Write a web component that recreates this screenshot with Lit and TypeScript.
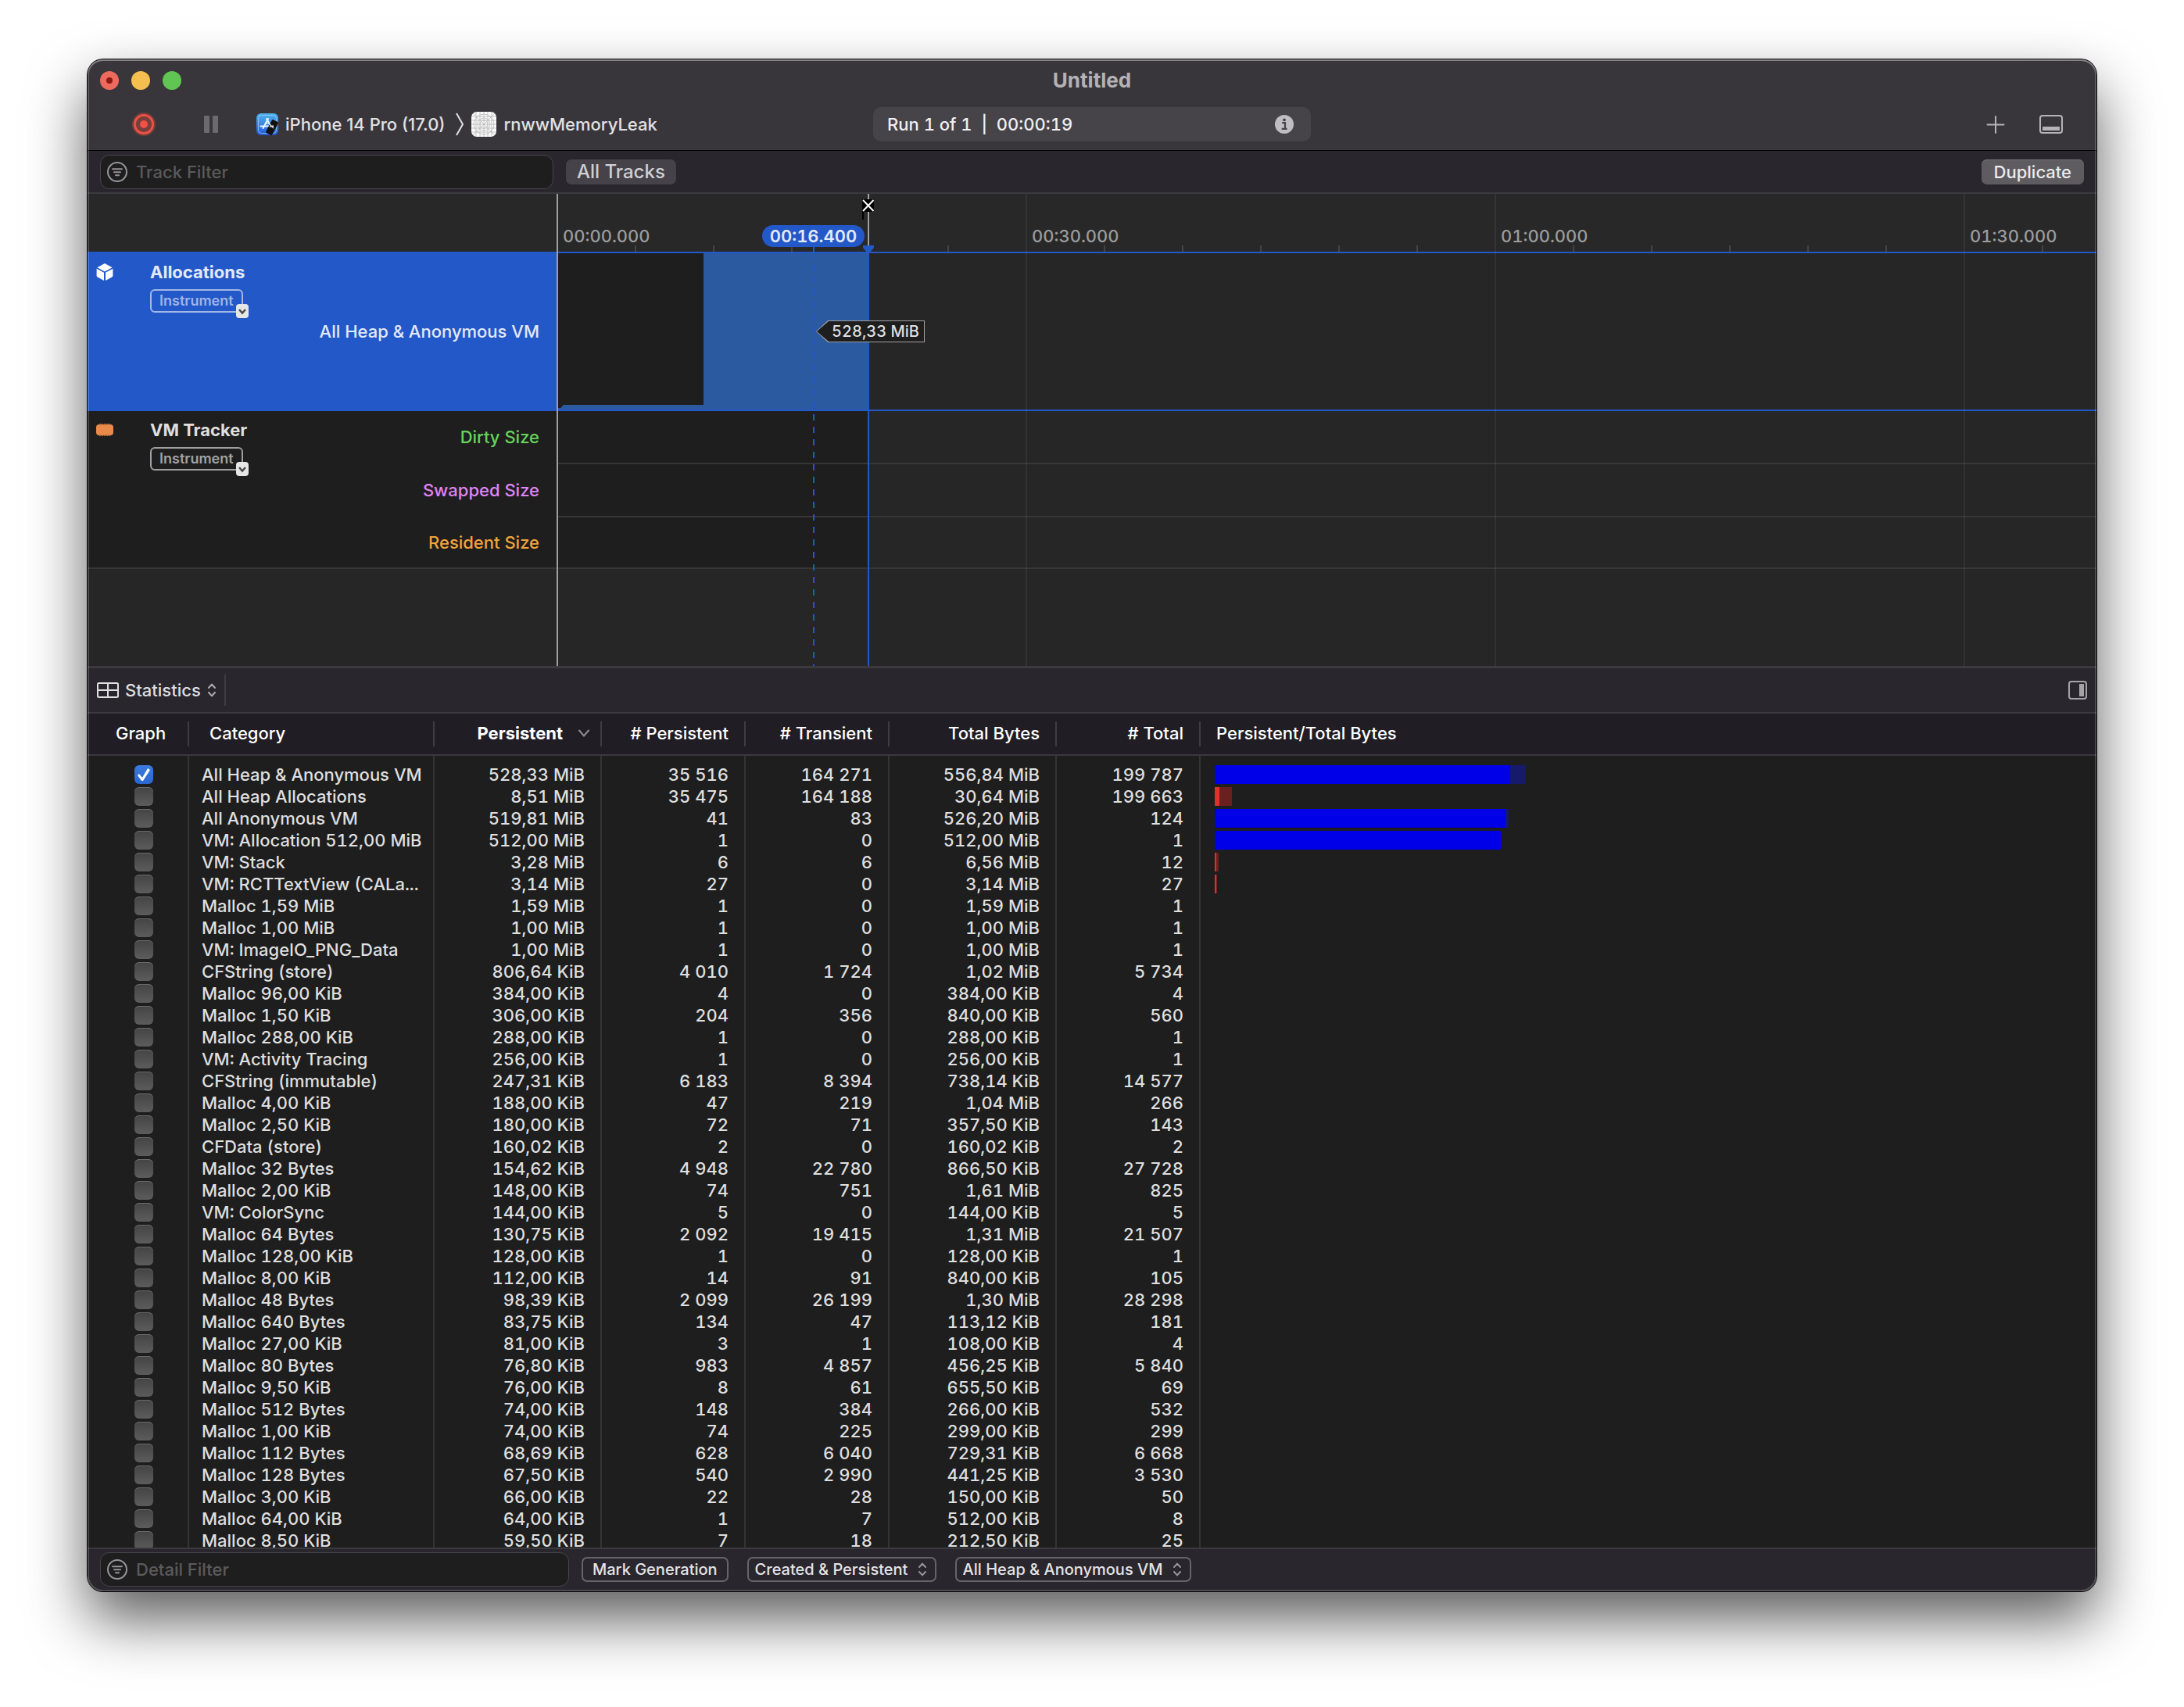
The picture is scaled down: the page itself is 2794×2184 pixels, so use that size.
import { LitElement, html, css, svg, nothing } from "lit";
import { customElement, property, state } from "lit/decorators.js";
import { classMap } from "lit/directives/class-map.js";

type Row = {
  category: string;
  persistent: string;
  nPersistent: string;
  nTransient: string;
  total: string;
  nTotal: string;
  bar?: { used: number; all: number; color: "blue" | "red" };
};

const row = (
  category: string,
  persistent: string,
  nPersistent: string,
  nTransient: string,
  total: string,
  nTotal: string,
  bar?: Row["bar"],
): Row => ({ category, persistent, nPersistent, nTransient, total, nTotal, bar });

const ROWS: Row[] = [
  row("All Heap & Anonymous VM", "528,33 MiB", "35 516", "164 271", "556,84 MiB", "199 787", { used: 378, all: 398, color: "blue" }),
  row("All Heap Allocations", "8,51 MiB", "35 475", "164 188", "30,64 MiB", "199 663", { used: 6, all: 22, color: "red" }),
  row("All Anonymous VM", "519,81 MiB", "41", "83", "526,20 MiB", "124", { used: 372, all: 376, color: "blue" }),
  row("VM: Allocation 512,00 MiB", "512,00 MiB", "1", "0", "512,00 MiB", "1", { used: 366, all: 366, color: "blue" }),
  row("VM: Stack", "3,28 MiB", "6", "6", "6,56 MiB", "12", { used: 2, all: 5, color: "red" }),
  row("VM: RCTTextView (CALa...", "3,14 MiB", "27", "0", "3,14 MiB", "27", { used: 2, all: 3, color: "red" }),
  row("Malloc 1,59 MiB", "1,59 MiB", "1", "0", "1,59 MiB", "1"),
  row("Malloc 1,00 MiB", "1,00 MiB", "1", "0", "1,00 MiB", "1"),
  row("VM: ImageIO_PNG_Data", "1,00 MiB", "1", "0", "1,00 MiB", "1"),
  row("CFString (store)", "806,64 KiB", "4 010", "1 724", "1,02 MiB", "5 734"),
  row("Malloc 96,00 KiB", "384,00 KiB", "4", "0", "384,00 KiB", "4"),
  row("Malloc 1,50 KiB", "306,00 KiB", "204", "356", "840,00 KiB", "560"),
  row("Malloc 288,00 KiB", "288,00 KiB", "1", "0", "288,00 KiB", "1"),
  row("VM: Activity Tracing", "256,00 KiB", "1", "0", "256,00 KiB", "1"),
  row("CFString (immutable)", "247,31 KiB", "6 183", "8 394", "738,14 KiB", "14 577"),
  row("Malloc 4,00 KiB", "188,00 KiB", "47", "219", "1,04 MiB", "266"),
  row("Malloc 2,50 KiB", "180,00 KiB", "72", "71", "357,50 KiB", "143"),
  row("CFData (store)", "160,02 KiB", "2", "0", "160,02 KiB", "2"),
  row("Malloc 32 Bytes", "154,62 KiB", "4 948", "22 780", "866,50 KiB", "27 728"),
  row("Malloc 2,00 KiB", "148,00 KiB", "74", "751", "1,61 MiB", "825"),
  row("VM: ColorSync", "144,00 KiB", "5", "0", "144,00 KiB", "5"),
  row("Malloc 64 Bytes", "130,75 KiB", "2 092", "19 415", "1,31 MiB", "21 507"),
  row("Malloc 128,00 KiB", "128,00 KiB", "1", "0", "128,00 KiB", "1"),
  row("Malloc 8,00 KiB", "112,00 KiB", "14", "91", "840,00 KiB", "105"),
  row("Malloc 48 Bytes", "98,39 KiB", "2 099", "26 199", "1,30 MiB", "28 298"),
  row("Malloc 640 Bytes", "83,75 KiB", "134", "47", "113,12 KiB", "181"),
  row("Malloc 27,00 KiB", "81,00 KiB", "3", "1", "108,00 KiB", "4"),
  row("Malloc 80 Bytes", "76,80 KiB", "983", "4 857", "456,25 KiB", "5 840"),
  row("Malloc 9,50 KiB", "76,00 KiB", "8", "61", "655,50 KiB", "69"),
  row("Malloc 512 Bytes", "74,00 KiB", "148", "384", "266,00 KiB", "532"),
  row("Malloc 1,00 KiB", "74,00 KiB", "74", "225", "299,00 KiB", "299"),
  row("Malloc 112 Bytes", "68,69 KiB", "628", "6 040", "729,31 KiB", "6 668"),
  row("Malloc 128 Bytes", "67,50 KiB", "540", "2 990", "441,25 KiB", "3 530"),
  row("Malloc 3,00 KiB", "66,00 KiB", "22", "28", "150,00 KiB", "50"),
  row("Malloc 64,00 KiB", "64,00 KiB", "1", "7", "512,00 KiB", "8"),
  row("Malloc 8,50 KiB", "59,50 KiB", "7", "18", "212,50 KiB", "25"),
];

const shared = css`
  * {
    box-sizing: border-box;
  }
  svg {
    display: block;
    flex: none;
  }
  button,
  input,
  select {
    margin: 0;
    padding: 0;
    border: 0;
    background: none;
    color: inherit;
    font: inherit;
    outline: none;
    appearance: none;
  }
`;

const filterIcon = svg`<svg width="26" height="26" viewBox="0 0 26 26" fill="none" stroke="#969499" stroke-width="2" stroke-linecap="round">
  <circle cx="13" cy="13" r="12"/><path d="M7 9.2h12M9 13.2h8M11 17.2h4"/></svg>`;

const upDown = (color: string) => svg`<svg width="12" height="18" viewBox="0 0 12 18" fill="none" stroke=${color} stroke-width="2" stroke-linecap="round" stroke-linejoin="round">
  <path d="M2 6l4-4.4L10 6M2 12l4 4.4L10 12"/></svg>`;

@customElement("filter-field")
class FilterField extends LitElement {
  @property() label = "";
  static styles = [
    shared,
    css`
      :host {
        display: block;
      }
      .field {
        display: flex;
        align-items: center;
        gap: 11px;
        height: 44px;
        padding: 0 8px;
        border: 1px solid #47454b;
        border-radius: 12px;
        background: #1e1e1e;
      }
      .input {
        flex: 1;
        min-width: 0;
        height: 40px;
        color: #dfdfdf;
      }
      .input::placeholder {
        color: #5b5a5d;
        opacity: 1;
      }
    `,
  ];
  render() {
    return html`<label class="field">
      ${filterIcon}
      <input class="input" type="text" placeholder=${this.label} aria-label=${this.label} />
    </label>`;
  }
}

@customElement("window-toolbar")
class WindowToolbar extends LitElement {
  static styles = [
    shared,
    css`
      :host {
        display: block;
        height: 117px;
        background: #39363b;
        border-bottom: 1px solid #000;
      }
      .title-row,
      .tool-row {
        display: grid;
        grid-template-columns: 1fr 560px 1fr;
        align-items: center;
      }
      .title-row {
        height: 54px;
      }
      .tool-row {
        height: 58px;
      }
      .lights {
        display: flex;
        gap: 16px;
        padding-left: 16px;
      }
      .light {
        display: grid;
        place-items: center;
        width: 24px;
        height: 24px;
        border-radius: 50%;
      }
      .close {
        background: #ed6a5e;
      }
      .close::after {
        content: "";
        width: 8px;
        height: 8px;
        border-radius: 50%;
        background: #8c1a10;
      }
      .min {
        background: #f4bf4f;
      }
      .max {
        background: #61c554;
      }
      .title {
        margin: 0;
        text-align: center;
        font-size: 26px;
        line-height: 30px;
        font-weight: 700;
        color: #b4b2b6;
      }
      .left {
        display: flex;
        align-items: center;
        padding-left: 57px;
      }
      .record {
        margin-right: 62px;
      }
      .pause {
        margin-right: 49px;
      }
      .target {
        display: flex;
        align-items: center;
        gap: 9px;
        color: #e2e1e3;
        white-space: nowrap;
      }
      .run {
        display: flex;
        align-items: center;
        justify-content: space-between;
        height: 44px;
        padding: 0 22px 0 18px;
        border-radius: 10px;
        background: #464449;
        color: #f0eff1;
        font-variant-numeric: tabular-nums;
      }
      .run-text {
        white-space: pre;
      }
      .right {
        display: flex;
        align-items: center;
        justify-content: flex-end;
        gap: 44px;
        padding-right: 43px;
      }
    `,
  ];
  render() {
    return html`
      <div class="title-row">
        <div class="lights">
          <button class="light close" aria-label="Close"></button>
          <button class="light min" aria-label="Minimize"></button>
          <button class="light max" aria-label="Zoom"></button>
        </div>
        <h1 class="title">Untitled</h1>
      </div>
      <div class="tool-row">
        <div class="left">
          <button class="record" aria-label="Record">
            <svg width="30" height="30" viewBox="0 0 30 30">
              <circle cx="15" cy="15" r="15" fill="#783e3c" />
              <circle cx="15" cy="15" r="11.6" fill="none" stroke="#ee5244" stroke-width="2.8" />
              <circle cx="15" cy="15" r="5" fill="#ee5244" />
            </svg>
          </button>
          <button class="pause" aria-label="Pause">
            <svg width="18" height="22" viewBox="0 0 18 22" fill="#6c6a6f">
              <rect width="7" height="22" rx="1" /><rect x="11" width="7" height="22" rx="1" />
            </svg>
          </button>
          <button class="target">
            <svg width="28" height="28" viewBox="0 0 28 28" fill="none">
              <defs>
                <linearGradient id="sim" x1="0" y1="0" x2="0" y2="1">
                  <stop offset="0" stop-color="#50b4ee" />
                  <stop offset="1" stop-color="#2457d6" />
                </linearGradient>
              </defs>
              <rect width="28" height="28" rx="6" fill="url(#sim)" />
              <rect x="2.5" y="2.5" width="23" height="23" rx="4" stroke="#9bd0f7" stroke-opacity=".75" />
              <g stroke="#eef6ff" stroke-width="2" stroke-linecap="round">
                <path d="M15 7L8.6 19M13 7l7 12M5.5 16.5h17" />
                <path d="M12.4 10.5h3.2M11.2 13h5.4" stroke-width="1" />
              </g>
              <rect x="-4.5" y="-9.5" width="9" height="19" rx="1.5" fill="#111" transform="translate(20 18) rotate(28)" />
              <path d="M16.5 13.500l5.500 5.500M17 17l5-1" stroke="#dfe6f2" stroke-width="1.4" />
            </svg>
            <span>iPhone 14 Pro (17.0)</span>
          </button>
          <svg width="34" height="30" viewBox="0 0 34 30" fill="none" stroke="#e2e1e3" stroke-width="2">
            <path d="M15 1l8 14-8 14" />
          </svg>
          <button class="target">
            <svg width="32" height="32" viewBox="0 0 32 32" fill="none">
              <rect width="32" height="32" rx="7" fill="#fbfbfb" />
              <g stroke="#b9b9b9" stroke-width=".8">
                <path d="M6 0v32M11 0v32M16 0v32M21 0v32M26 0v32M0 6h32M0 11h32M0 16h32M0 21h32M0 26h32M2 2l28 28M30 2L2 30" />
                <circle cx="16" cy="16" r="13" /><circle cx="16" cy="16" r="8" /><circle cx="16" cy="16" r="5" />
              </g>
            </svg>
            <span>rnwwMemoryLeak</span>
          </button>
        </div>
        <div class="run">
          <span class="run-text">Run 1 of 1  |  00:00:19</span>
          <button aria-label="Run info">
            <svg width="24" height="24" viewBox="0 0 24 24">
              <circle cx="12" cy="12" r="12" fill="#bfbdc2" />
              <circle cx="12" cy="6.3" r="1.9" fill="#464449" />
              <path d="M9.2 10.2h3.800v7.300M8.700 17.800h6.800" fill="none" stroke="#464449" stroke-width="2.2" />
            </svg>
          </button>
        </div>
        <div class="right">
          <button aria-label="Add instrument">
            <svg width="24" height="24" viewBox="0 0 24 24" stroke="#b5b3b8" stroke-width="2" stroke-linecap="round">
              <path d="M12 2v21M1.500 12.500h21" />
            </svg>
          </button>
          <button aria-label="Toggle detail area">
            <svg width="30" height="24" viewBox="0 0 30 24">
              <rect x="1" y="1" width="28" height="22" rx="3" fill="none" stroke="#b5b3b8" stroke-width="2" />
              <rect x="4" y="15" width="22" height="5" rx=".5" fill="#b5b3b8" />
            </svg>
          </button>
        </div>
      </div>
    `;
  }
}

@customElement("track-timeline")
class TrackTimeline extends LitElement {
  static styles = [
    shared,
    css`
      :host {
        display: block;
        position: relative;
        height: 604px;
        background: #262626;
        color: #dfdfdf;
      }
      .track {
        display: grid;
        grid-template-columns: 600px minmax(0, 1fr);
      }
      .ruler {
        height: 74px;
        background: #282828;
      }
      .times {
        display: flex;
        overflow: hidden;
        padding-top: 40px;
        line-height: 28px;
        color: #9c9c9c;
        font-variant-numeric: tabular-nums;
      }
      .time {
        flex: none;
        width: 600px;
        padding-left: 8px;
      }
      .alloc {
        height: 204px;
        border-top: 2px solid #2358c9;
        border-bottom: 2px solid #2358c9;
      }
      .head {
        display: grid;
        grid-template-columns: 69px 1fr auto;
        padding: 0 22px 0 11px;
      }
      .alloc .head {
        background: #2358c9;
        color: #e3e9f8;
      }
      .vm {
        height: 202px;
        border-bottom: 2px solid #363636;
      }
      .vm .head {
        background: #1e1e1e;
      }
      .icon {
        padding-top: 13px;
      }
      .name {
        margin: 0;
        padding-top: 10px;
        font-size: inherit;
        line-height: 28px;
        font-weight: 700;
      }
      .badge {
        position: relative;
        display: block;
        height: 30px;
        margin-top: 8px;
        padding: 0 10px;
        border: 2px solid #9f9f9f;
        border-radius: 6px;
        font-size: 18px;
        line-height: 26px;
        font-weight: 600;
        color: #a2a2a2;
      }
      .alloc .badge {
        border-color: #a3b7e6;
        color: #9fb5e8;
      }
      .knob {
        position: absolute;
        right: -9px;
        bottom: -9px;
      }
      .rows {
        display: grid;
        grid-template-rows: 68px 68px 64px;
        align-items: center;
        text-align: right;
      }
      .single {
        align-self: center;
      }
      .dirty {
        color: #66d45c;
        padding-bottom: 2px;
      }
      .swapped {
        color: #e084f5;
        padding-bottom: 2px;
      }
      .resident {
        color: #f1a33c;
      }
      .recorded {
        width: 398px;
        height: 100%;
        background: #1e1e1e;
      }
      .lane {
        border-bottom: 2px solid #363636;
      }
      .lane:last-child {
        border-bottom: 0;
      }
      .lanes {
        display: grid;
        grid-template-rows: 68px 68px 64px;
      }
      .overlay {
        position: absolute;
        inset: 0 0 0 600px;
        overflow: hidden;
        pointer-events: none;
      }
      .grid-line {
        position: absolute;
        top: 0;
        bottom: 0;
        width: 2px;
        background: rgba(255, 255, 255, 0.06);
      }
      .tick {
        position: absolute;
        top: 66px;
        width: 2px;
        height: 8px;
        background: #444;
      }
      .origin {
        position: absolute;
        inset: 0 auto 0 0;
        width: 2px;
        background: #a0a0a3;
      }
      .end {
        position: absolute;
        top: 74px;
        bottom: 0;
        left: 398px;
        width: 2px;
        background: #2358c9;
      }
      .end-top {
        position: absolute;
        top: 0;
        left: 398px;
        width: 2px;
        height: 68px;
        background: #a0a0a3;
      }
      .marker {
        position: absolute;
        top: 6px;
        left: 388px;
      }
      .inspect {
        position: absolute;
        top: 74px;
        bottom: 0;
        left: 328px;
        width: 2px;
        background: repeating-linear-gradient(#2358c9 0 8px, transparent 8px 16px);
      }
      .inspect-top {
        position: absolute;
        top: 66px;
        left: 328px;
        width: 2px;
        height: 8px;
        background: #2358c9;
      }
      .pill {
        position: absolute;
        top: 40px;
        left: 263px;
        width: 131px;
        border-radius: 14px;
        background: #2358c9;
        color: #e3e9f8;
        text-align: center;
        line-height: 28px;
        font-weight: 600;
        font-variant-numeric: tabular-nums;
      }
      .flag {
        position: absolute;
        top: 162px;
        left: 332px;
        height: 28px;
        padding: 1px;
        background: #a0a0a0;
        clip-path: polygon(0 50%, 15px 0, 100% 0, 100% 100%, 15px 100%);
      }
      .flag-text {
        display: block;
        height: 26px;
        padding: 0 6px 0 19px;
        background: #1e1e1e;
        clip-path: polygon(0 50%, 15px 0, 100% 0, 100% 100%, 15px 100%);
        font-size: 20px;
        line-height: 27px;
        font-weight: 500;
        white-space: nowrap;
        font-variant-numeric: tabular-nums;
      }
    `,
  ];
  private badge() {
    return html`<button class="badge">
      Instrument
      <svg class="knob" width="16" height="18" viewBox="0 0 16 18">
        <rect width="16" height="18" rx="4" fill="#e6e6e6" />
        <path d="M4 7l4 4.500L12 7" fill="none" stroke="#4a4a4a" stroke-width="2.5" />
      </svg>
    </button>`;
  }
  render() {
    const ticks = Array.from({ length: 19 }, (_, i) => i + 1).filter((i) => i % 6 !== 0);
    return html`
      <div class="track ruler">
        <div></div>
        <div class="times">
          ${["00:00.000", "00:30.000", "01:00.000", "01:30.000"].map((t) => html`<span class="time">${t}</span>`)}
        </div>
      </div>
      <section class="track alloc">
        <div class="head">
          <div class="icon">
            <svg width="22" height="22" viewBox="0 0 22 22" fill="#fff">
              <path d="M11 0l9.6 5.2L11 10.4 1.4 5.2z" />
              <path d="M.6 6.800l9.400 5V22L1.800 17.600A2.400 2.400 0 0 1 .6 15.600z" />
              <path d="M21.400 6.800l-9.400 5V22l8.200-4.400a2.400 2.400 0 0 0 1.200-2z" />
            </svg>
          </div>
          <div>
            <h2 class="name">Allocations</h2>
            ${this.badge()}
          </div>
          <span class="single">All Heap &amp; Anonymous VM</span>
        </div>
        <div class="recorded">
          <svg width="398" height="200" viewBox="0 0 398 200">
            <path d="M0 200v-2h6v-2h2v-2h1H188V0H398V200z" fill="#2b5aa0" />
          </svg>
        </div>
      </section>
      <section class="track vm">
        <div class="head">
          <div class="icon">
            <svg width="22" height="22" viewBox="0 0 22 22">
              <rect x="0" y="4" width="22" height="14" rx="4" fill="#ea8a4a" />
              <path d="M4 3h2v2H4zM7 3h2v2H7zM10 3h2v2h-2zM13 3h2v2h-2zM16 3h2v2h-2zM4 17h2v2H4zM7 17h2v2H7zM10 17h2v2h-2zM13 17h2v2h-2zM16 17h2v2h-2z" fill="#b86d3d" />
            </svg>
          </div>
          <div>
            <h2 class="name">VM Tracker</h2>
            ${this.badge()}
          </div>
          <div class="rows">
            <span class="dirty">Dirty Size</span>
            <span class="swapped">Swapped Size</span>
            <span class="resident">Resident Size</span>
          </div>
        </div>
        <div class="lanes">
          ${[0, 1, 2].map(() => html`<div class="lane"><div class="recorded"></div></div>`)}
        </div>
      </section>
      <div class="overlay">
        ${[600, 1200, 1800].map((x) => html`<div class="grid-line" style="left:${x}px"></div>`)}
        ${ticks.map((i) => html`<div class="tick" style="left:${i * 100}px"></div>`)}
        <div class="origin"></div>
        <div class="inspect-top"></div>
        <div class="inspect"></div>
        <div class="end-top"></div>
        <div class="end"></div>
        <svg class="marker" width="22" height="70" viewBox="0 0 22 70">
          <rect x="3" y="1" width="15" height="16" fill="#000" />
          <path d="M3 17h2v10H3z" fill="#000" />
          <path d="M4 2l13.500 14M17.500 2L4 16" stroke="#fff" stroke-width="2" />
          <path d="M4 60h14v3l-6 7h-2l-6-7z" fill="#2358c9" />
        </svg>
        <span class="pill">00:16.400</span>
        <div class="flag"><span class="flag-text">528,33 MiB</span></div>
      </div>
    `;
  }
}

@customElement("statistics-table")
class StatisticsTable extends LitElement {
  @state() private selected = new Set([0]);
  static styles = [
    shared,
    css`
      :host {
        display: block;
        flex: 1 1 0;
        min-height: 0;
        overflow: hidden;
        background: #1e1e1e;
        color: #dfdfdf;
      }
      .table {
        width: 100%;
        table-layout: fixed;
        border-spacing: 0;
        font-variant-numeric: tabular-nums;
      }
      .c-graph {
        width: 130px;
      }
      .c-name {
        width: 314px;
      }
      .c-bytes {
        width: 214px;
      }
      .c-count {
        width: 184px;
      }
      .th {
        height: 54px;
        padding: 0;
        border-bottom: 2px solid #3a383e;
        background: #201d24;
        color: #fff;
        font-weight: 500;
      }
      .sort {
        display: flex;
        align-items: center;
        gap: 20px;
        width: 100%;
        height: 32px;
        padding: 0 20px 2px 26px;
        border-right: 2px solid #3f3d43;
      }
      .sort-graph {
        padding-left: 36px;
      }
      .sort-num {
        justify-content: flex-end;
        padding-left: 0;
      }
      .sort-active {
        font-weight: 700;
        padding-right: 14px;
      }
      .sort-last {
        padding-left: 20px;
        border-right: 0;
      }
      .td {
        height: 28px;
        padding: 0 20px 0 16px;
        border-right: 2px solid #343434;
        line-height: 28px;
        white-space: nowrap;
        overflow: hidden;
      }
      .first .td {
        height: 38px;
        padding-top: 10px;
      }
      .num {
        text-align: right;
        padding-left: 0;
      }
      .check-cell {
        padding-left: 60px;
      }
      .bar-cell {
        padding-left: 18px;
        border-right: 0;
      }
      .check {
        display: block;
        width: 24px;
        height: 24px;
        border-radius: 6px;
        background: linear-gradient(#444, #5c5c5c);
        box-shadow: inset 0 1px 0 #6a6a6a;
      }
      .check:checked {
        background: linear-gradient(#3b7be0, #2b66cf);
        box-shadow: none;
      }
      .check:checked::before {
        content: "";
        display: block;
        width: 24px;
        height: 24px;
        background: #fff;
        clip-path: polygon(4px 13px, 6px 11px, 10px 16px, 17px 4px, 20px 6px, 11px 20px, 9px 20px);
      }
      .bar {
        display: flex;
        height: 24px;
      }
      .bar-used,
      .bar-rest {
        height: 24px;
      }
      .blue .bar-used {
        background: #0000e8;
      }
      .blue .bar-rest {
        background: #151a6a;
      }
      .red .bar-used {
        background: #e03028;
      }
      .red .bar-rest {
        background: #6b2020;
      }
    `,
  ];
  private toggle(i: number) {
    const next = new Set(this.selected);
    next.has(i) ? next.delete(i) : next.add(i);
    this.selected = next;
  }
  private numHead(label: string, active = false) {
    return html`<th class="th" scope="col">
      <button class=${classMap({ sort: true, "sort-num": true, "sort-active": active })}>
        ${label}
        ${active
          ? html`<svg width="14" height="10" viewBox="0 0 14 10" fill="none" stroke="#8f8d92" stroke-width="2" stroke-linecap="round"><path d="M1 1.500l6 7 6-7" /></svg>`
          : nothing}
      </button>
    </th>`;
  }
  render() {
    return html`<table class="table">
      <colgroup>
        <col class="c-graph" /><col class="c-name" /><col class="c-bytes" /><col class="c-count" />
        <col class="c-count" /><col class="c-bytes" /><col class="c-count" /><col />
      </colgroup>
      <thead>
        <tr>
          <th class="th" scope="col"><button class="sort sort-graph">Graph</button></th>
          <th class="th" scope="col"><button class="sort">Category</button></th>
          ${this.numHead("Persistent", true)} ${this.numHead("# Persistent")} ${this.numHead("# Transient")}
          ${this.numHead("Total Bytes")} ${this.numHead("# Total")}
          <th class="th" scope="col"><button class="sort sort-last">Persistent/Total Bytes</button></th>
        </tr>
      </thead>
      <tbody>
        ${ROWS.map(
          (r, i) => html`<tr class=${i === 0 ? "first" : ""}>
            <td class="td check-cell">
              <input class="check" type="checkbox" aria-label=${r.category} .checked=${this.selected.has(i)} @change=${() => this.toggle(i)} />
            </td>
            <td class="td">${r.category}</td>
            <td class="td num">${r.persistent}</td>
            <td class="td num">${r.nPersistent}</td>
            <td class="td num">${r.nTransient}</td>
            <td class="td num">${r.total}</td>
            <td class="td num">${r.nTotal}</td>
            <td class="td bar-cell">
              ${r.bar
                ? html`<div class="bar ${r.bar.color}">
                    <div class="bar-used" style="width:${r.bar.used}px"></div>
                    <div class="bar-rest" style="width:${r.bar.all - r.bar.used}px"></div>
                  </div>`
                : nothing}
            </td>
          </tr>`,
        )}
      </tbody>
    </table>`;
  }
}

@customElement("app-root")
class AppRoot extends LitElement {
  static styles = [
    shared,
    css`
      :host {
        display: flex;
        box-sizing: border-box;
        height: 100vh;
        padding: 76px 112px 148px;
        background: #fff;
        font-family: Inter, "Liberation Sans", sans-serif;
        font-size: 22px;
        font-weight: 450;
        line-height: 28px;
      }
      .window {
        position: relative;
        display: flex;
        flex-direction: column;
        flex: 1;
        min-width: 0;
        border-radius: 20px;
        overflow: hidden;
        background: #29262d;
      }
      .shadow {
        display: flex;
        flex: 1;
        min-width: 0;
        border-radius: 20px;
        box-shadow: 0 0 0 1px #000, 0 36px 76px rgba(0, 0, 0, 0.64);
      }
      .window::after {
        content: "";
        position: absolute;
        inset: 0;
        border-radius: 20px;
        box-shadow: inset 0 0 0 2px rgba(255, 255, 255, 0.18), inset 0 2px 0 rgba(255, 255, 255, 0.25);
        pointer-events: none;
      }
      .filter-bar {
        display: flex;
        align-items: center;
        gap: 16px;
        height: 55px;
        padding: 0 16px;
        border-bottom: 2px solid #3c3a3f;
      }
      .track-filter {
        width: 580px;
      }
      .chip {
        height: 32px;
        padding: 0 14px;
        border-radius: 7px;
        background: #454349;
        color: #d0cfd2;
        font-size: 24px;
        line-height: 32px;
      }
      .duplicate {
        margin-left: auto;
        padding: 0 16px;
        background: #5e5c61;
        color: #ebebec;
        font-size: 22px;
        box-shadow: inset 0 1px 0 #77757a;
      }
      .view-bar {
        display: flex;
        align-items: center;
        height: 61px;
        border-top: 3px solid #3c3a3f;
        border-bottom: 2px solid #3c3a3f;
        padding: 0 12px;
      }
      .view {
        display: flex;
        align-items: center;
        gap: 8px;
        height: 40px;
        padding-right: 10px;
        border-right: 2px solid #3f3d43;
        color: #dfdfe0;
        font-weight: 500;
      }
      .panel {
        margin-left: auto;
      }
      .footer {
        display: flex;
        align-items: center;
        height: 56px;
        padding: 0 16px 2px;
        border-top: 2px solid #3c3a3f;
        color: #e4e3e5;
      }
      .detail-filter {
        width: 600px;
        margin-right: 16px;
      }
      .action {
        display: flex;
        align-items: center;
        gap: 12px;
        height: 32px;
        margin-right: 24px;
        padding: 0 10px 0 8px;
        border: 2px solid #66646a;
        border-radius: 7px;
        font-size: 20px;
        font-weight: 500;
      }
      .mark {
        padding: 0 12px;
      }
    `,
  ];
  render() {
    return html`<div class="shadow">
      <main class="window">
        <window-toolbar></window-toolbar>
        <div class="filter-bar">
          <filter-field class="track-filter" label="Track Filter"></filter-field>
          <button class="chip">All Tracks</button>
          <button class="chip duplicate">Duplicate</button>
        </div>
        <track-timeline></track-timeline>
        <div class="view-bar">
          <label class="view">
            <svg width="28" height="20" viewBox="0 0 28 20" fill="none" stroke="#dfdfe0" stroke-width="2">
              <rect x="1" y="1" width="26" height="18" rx="1.5" /><path d="M14 1v18M1 10h26" />
            </svg>
            <select aria-label="Detail view"><option>Statistics</option></select>
            ${upDown("#b0aeb3")}
          </label>
          <button class="panel" aria-label="Toggle inspector">
            <svg width="24" height="24" viewBox="0 0 24 24">
              <rect x="1" y="1" width="22" height="22" rx="3" fill="none" stroke="#a5a3a8" stroke-width="2" />
              <rect x="14" y="4" width="6" height="16" fill="#a5a3a8" />
            </svg>
          </button>
        </div>
        <statistics-table></statistics-table>
        <div class="footer">
          <filter-field class="detail-filter" label="Detail Filter"></filter-field>
          <button class="action mark">Mark Generation</button>
          <label class="action">
            <select aria-label="Allocation lifespan"><option>Created &amp; Persistent</option></select>
            ${upDown("#98969b")}
          </label>
          <label class="action">
            <select aria-label="Allocation type"><option>All Heap &amp; Anonymous VM</option></select>
            ${upDown("#98969b")}
          </label>
        </div>
      </main>
    </div>`;
  }
}
